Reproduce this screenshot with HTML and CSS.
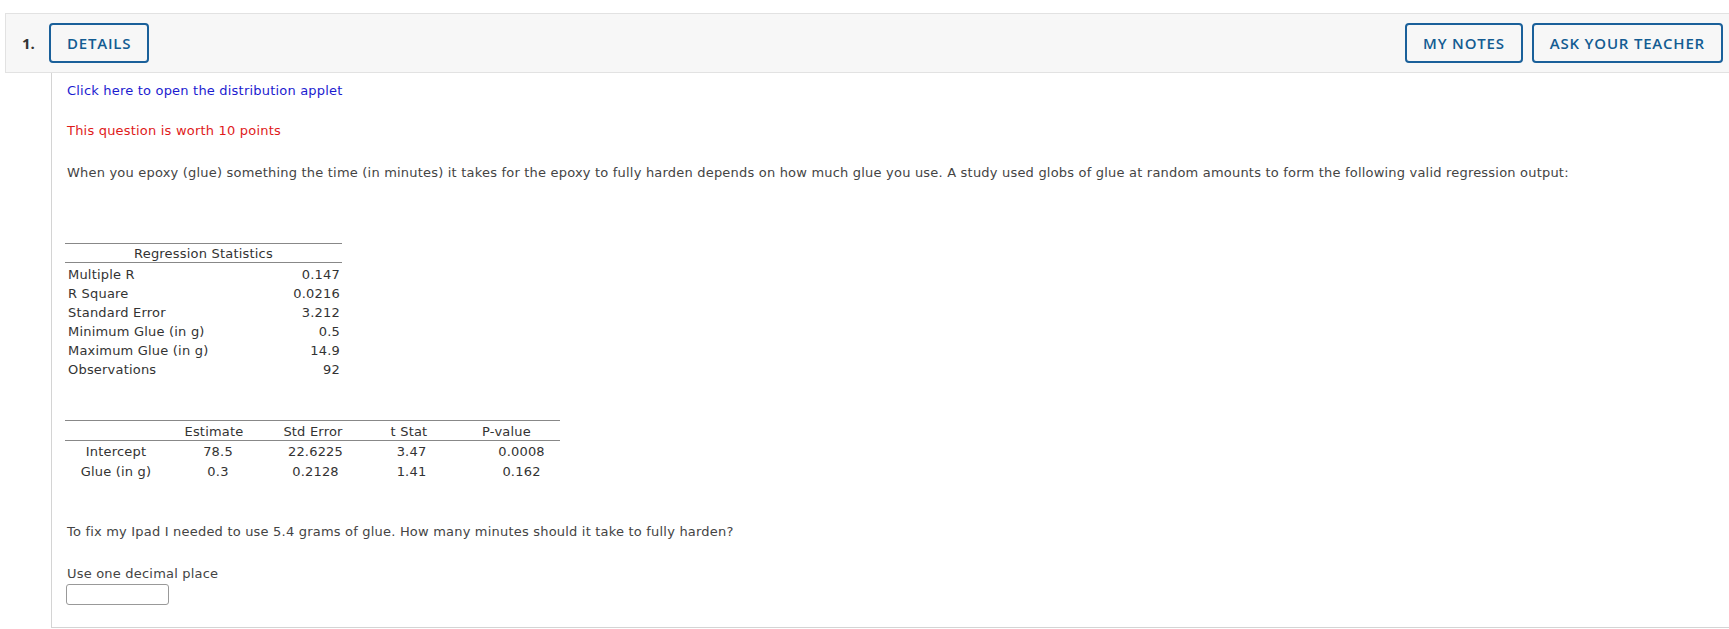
FILE: index.html
```html
<!DOCTYPE html>
<html lang="en">
<head>
    <meta charset="UTF-8">
    <title>Question 1</title>
    <link rel="stylesheet" href="styles.css">
</head>
<body>
    <div class="page">
        <div class="qhead">
            <span class="qnum">1.</span>
            <button class="hbtn">DETAILS</button>
            <div class="hright">
                <button class="hbtn">MY NOTES</button>
                <button class="hbtn">ASK YOUR TEACHER</button>
            </div>
        </div>

        <div class="qbody">
            <a class="applet" href="#">Click here to open the distribution applet</a>
            <div class="worth">This question is worth 10 points</div>
            <div class="txt">When you epoxy (glue) something the time (in minutes) it takes for the epoxy to fully harden depends on how much glue you use. A study used globs of glue at random amounts to form the following valid regression output:</div>

            <table class="stats">
                <tr><th colspan="2">Regression Statistics</th></tr>
                <tr><td>Multiple R</td><td class="num">0.147</td></tr>
                <tr><td>R Square</td><td class="num">0.0216</td></tr>
                <tr><td>Standard Error</td><td class="num">3.212</td></tr>
                <tr><td>Minimum Glue (in g)</td><td class="num">0.5</td></tr>
                <tr><td>Maximum Glue (in g)</td><td class="num">14.9</td></tr>
                <tr><td>Observations</td><td class="num">92</td></tr>
            </table>

            <table class="coef">
                <tr><th class="c1"></th><th class="c2">Estimate</th><th class="c3">Std Error</th><th class="c4">t Stat</th><th class="c5">P-value</th></tr>
                <tr><td>Intercept</td><td class="c2">78.5</td><td class="c3">22.6225</td><td class="c4">3.47</td><td class="c5">0.0008</td></tr>
                <tr><td>Glue (in g)</td><td class="c2">0.3</td><td class="c3">0.2128</td><td class="c4">1.41</td><td class="c5">0.162</td></tr>
            </table>

            <div class="txt ask">To fix my Ipad I needed to use 5.4 grams of glue. How many minutes should it take to fully harden?</div>
            <div class="txt hint">Use one decimal place</div>
            <input type="text" class="answer">
        </div>
    </div>
</body>
</html>
```

FILE: styles.css
```css
body { margin: 0; background: #fff; font-family: "DejaVu Sans", Verdana, sans-serif; font-size: 13px; letter-spacing: 0.2px; color: #333; }
.page { padding: 13px 0 0 5px; }

.qhead { display: flex; align-items: center; height: 58px; padding-left: 16px; background: #f7f7f7; border: 1px solid #e2e2e2; border-right: none; }
.qnum { font-family: "Open Sans", sans-serif; font-weight: 700; font-size: 15px; letter-spacing: 0; color: #333; width: 27px; }
.hright { margin-left: auto; display: flex; gap: 9px; padding-right: 6px; }
.hbtn { font-family: "Open Sans", sans-serif; font-weight: 600; font-size: 15px; letter-spacing: 0.8px; color: #135c92; background: #f7f7f7; border: 2px solid #1a609a; border-radius: 4px; height: 40px; padding: 0 16px; cursor: pointer; }

.qbody { margin-left: 46px; padding: 9px 0 22px 15px; border-left: 1px solid #d4d4d4; border-bottom: 1px solid #d4d4d4; }
.qbody .txt, .applet, .worth { display: block; line-height: 18px; }
.applet { color: #1c1cd0; text-decoration: none; margin-bottom: 22px; }
.worth { color: #e01b1b; margin-bottom: 24px; }
.txt { color: #444; }

table { border-collapse: collapse; margin-left: -2px; color: #333; font-size: 13px; }
th { font-weight: normal; height: 18px; padding: 0; border-top: 1px solid #888; border-bottom: 1px solid #888; }
.stats { width: 277px; margin-top: 61px; }
.stats td { height: 15px; line-height: 15px; padding: 4px 2px 0 3px; }
.stats .num { text-align: right; }

.coef { width: 495px; margin-top: 43px; table-layout: fixed; }
.coef th { padding-top: 2px; height: 17px; }
.coef th, .coef td { text-align: center; }
.coef td { height: 20px; padding: 0; }
.coef th.c1 { width: 102px; }
.coef th.c2 { width: 94px; }
.coef th.c3 { width: 104px; }
.coef th.c4 { width: 88px; }
.coef th.c5 { width: 107px; }
.coef td.c2 { padding-left: 8px; }
.coef td.c3 { padding-left: 5px; }
.coef td.c4 { padding-left: 5px; }
.coef td.c5 { padding-left: 30px; }

.ask { margin-top: 42px; }
.hint { margin-top: 24px; }
.answer { display: block; width: 103px; height: 21px; box-sizing: border-box; margin: 1px 0 0 -1px; border: 1px solid #999; border-radius: 3px; }
```
